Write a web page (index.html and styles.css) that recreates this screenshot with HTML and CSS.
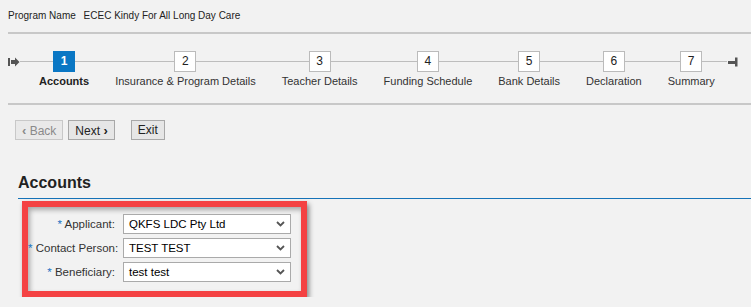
FILE: index.html
```html
<!DOCTYPE html>
<html lang="en">
<head>
  <meta charset="UTF-8">
  <title>Application - Accounts</title>
  <link rel="stylesheet" href="styles.css">
</head>
<body>
  <div class="page">
    <div class="program">
      <span class="program-label">Program Name</span>
      <span class="program-value">ECEC Kindy For All Long Day Care</span>
    </div>

    <div class="stepper">
      <svg class="step-cap" width="12" height="10" viewBox="0 0 12 10">
        <rect x="0" y="1" width="2" height="8" fill="#555"/>
        <path d="M3 3 H7 V0.5 L11.5 5 L7 9.5 V7 H3 Z" fill="#555"/>
      </svg>
      <div class="steps">
        <div class="step active"><span class="step-num">1</span><span class="step-label">Accounts</span></div>
        <div class="step"><span class="step-num">2</span><span class="step-label">Insurance &amp; Program Details</span></div>
        <div class="step"><span class="step-num">3</span><span class="step-label">Teacher Details</span></div>
        <div class="step"><span class="step-num">4</span><span class="step-label">Funding Schedule</span></div>
        <div class="step"><span class="step-num">5</span><span class="step-label">Bank Details</span></div>
        <div class="step"><span class="step-num">6</span><span class="step-label">Declaration</span></div>
        <div class="step"><span class="step-num">7</span><span class="step-label">Summary</span></div>
      </div>
      <svg class="step-cap end" width="10" height="10" viewBox="0 0 10 10">
        <rect x="0" y="4" width="8" height="3" fill="#555"/>
        <rect x="7" y="0.5" width="2.5" height="9" fill="#555"/>
      </svg>
    </div>

    <div class="actions">
      <button class="btn" disabled><span class="chev">&#x2039;</span> Back</button>
      <button class="btn">Next <span class="chev">&#x203A;</span></button>
      <button class="btn exit">Exit</button>
    </div>

    <h2 class="section-title">Accounts</h2>

    <div class="highlight">
      <div class="form-row">
        <label class="form-label"><span class="req">*</span> Applicant:</label>
        <div class="select"><span>QKFS LDC Pty Ltd</span><svg width="9" height="6" viewBox="0 0 9 6"><path d="M1 1 L4.5 4.5 L8 1" fill="none" stroke="#555" stroke-width="1.8"/></svg></div>
      </div>
      <div class="form-row">
        <label class="form-label"><span class="req">*</span> Contact Person:</label>
        <div class="select"><span>TEST TEST</span><svg width="9" height="6" viewBox="0 0 9 6"><path d="M1 1 L4.5 4.5 L8 1" fill="none" stroke="#555" stroke-width="1.8"/></svg></div>
      </div>
      <div class="form-row">
        <label class="form-label"><span class="req">*</span> Beneficiary:</label>
        <div class="select"><span>test test</span><svg width="9" height="6" viewBox="0 0 9 6"><path d="M1 1 L4.5 4.5 L8 1" fill="none" stroke="#555" stroke-width="1.8"/></svg></div>
      </div>
    </div>
  </div>
</body>
</html>
```

FILE: styles.css
```css
body {
  margin: 0;
  background: #f2f2f2;
  font-family: "Liberation Sans", Arial, sans-serif;
  font-size: 12px;
  color: #333;
}
.page {
  padding-left: 8px;
}
.program {
  height: 32px;
  line-height: 32px;
  font-size: 10px;
  color: #222;
  border-bottom: 2px solid #c8c8c8;
}
.program-value {
  margin-left: 5px;
}
.stepper {
  position: relative;
  display: flex;
  align-items: flex-start;
  height: 69px;
  border-bottom: 2px solid #c8c8c8;
}
.stepper::before {
  content: "";
  position: absolute;
  left: 12px;
  right: 24px;
  top: 27px;
  height: 1px;
  background: #bdbdbd;
}
.step-cap {
  position: relative;
  margin-top: 23px;
}
.steps {
  position: relative;
  display: flex;
  margin-left: 6px;
}
.step {
  display: flex;
  flex-direction: column;
  align-items: center;
  padding: 17px 13px 0;
}
.step-num {
  width: 20px;
  height: 19px;
  line-height: 19px;
  text-align: center;
  background: #fff;
  border: 1px solid #bbb;
  color: #222;
}
.step.active .step-num {
  background: #0a77c4;
  border-color: #0a77c4;
  color: #fff;
  font-weight: bold;
}
.step-label {
  margin-top: 3px;
  white-space: nowrap;
  font-size: 11px;
  color: #333;
}
.step.active .step-label {
  font-weight: bold;
  color: #222;
}
.actions {
  display: flex;
  gap: 5px;
  padding: 15px 0 0 7px;
  height: 20px;
}
.btn {
  height: 20px;
  padding: 0 6px;
  font-family: inherit;
  font-size: 12px;
  color: #222;
  background: #e6e6e6;
  border: 1px solid #a8a8a8;
  border-radius: 0;
}
.btn[disabled] {
  color: #8a8a8a;
  background: #e9e9e9;
  border-color: #c8c8c8;
}
.btn.exit {
  margin-left: 11px;
}
.chev {
  font-weight: bold;
  font-size: 13px;
}
.section-title {
  margin: 34px 0 0 10px;
  padding-bottom: 6px;
  font-size: 16px;
  color: #222;
  border-bottom: 1px solid #1673b8;
}
.highlight {
  width: 273px;
  margin: 2px 0 0 14px;
  padding: 7px 0 9px;
  border: 6px solid #f44243;
  box-shadow: 2px 3px 5px rgba(0,0,0,0.45), inset 2px 3px 5px rgba(0,0,0,0.3);
  display: flex;
  flex-direction: column;
  gap: 4px;
}
.form-row {
  display: flex;
  align-items: center;
}
.form-label {
  width: 87px;
  text-align: right;
  white-space: nowrap;
  margin-right: 8px;
  font-size: 11.5px;
}
.req {
  color: #1a73c4;
}
.select {
  display: flex;
  align-items: center;
  justify-content: space-between;
  width: 156px;
  height: 18px;
  padding: 0 5px;
  background: #fff;
  border: 1px solid #aaa;
  color: #000;
  font-size: 11.5px;
}
```
